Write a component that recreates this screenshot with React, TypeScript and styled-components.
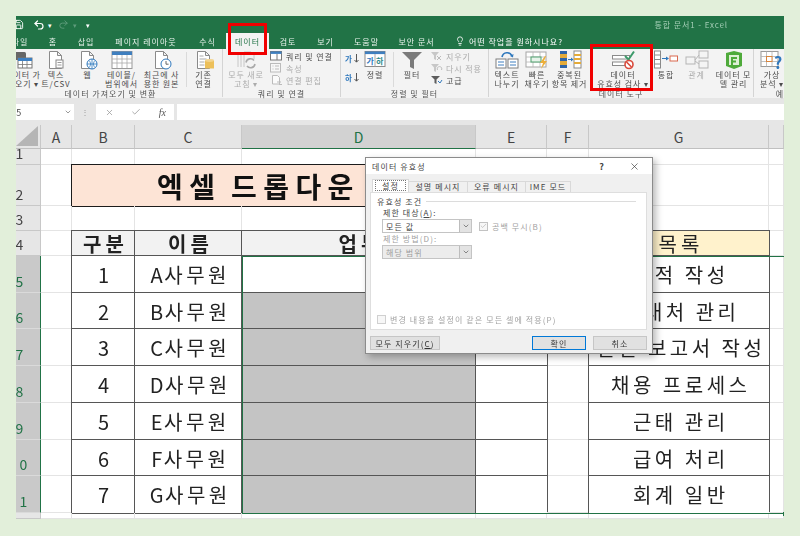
import React from "react";
import styled, { createGlobalStyle } from "styled-components";
import { Save, Undo2, Redo2, Lightbulb, X, Check, ChevronDown } from "lucide-react";

const FONT = `"Noto Sans CJK KR", "Noto Sans", sans-serif`;

const Global = createGlobalStyle`
  html, body { margin: 0; padding: 0; background: #e2efda; }
  * { box-sizing: border-box; }
`;

const Page = styled.div`
  position: relative;
  width: 800px;
  height: 536px;
  padding: 16px 16px 17px;
  background: #e2efda;
  font-family: ${FONT};
  overflow: hidden;
`;
const Win = styled.div`
  height: 503px;
  background: #fff;
  overflow: hidden;
  display: flex;
  flex-direction: column;
`;
const Green = styled.div`
  height: 33px;
  flex: none;
  background: #217346;
  display: flex;
  flex-direction: column;
  filter: blur(0.4px);
`;
const Qat = styled.div`
  height: 17px;
  display: flex;
  align-items: center;
  margin-left: -3px;
  color: #fff;
`;
const QatGap = styled.span<{ $w: number; $dim?: boolean }>`
  width: ${(p) => p.$w}px;
  flex: none;
  display: flex;
  justify-content: center;
  font-size: 7px;
  color: ${(p) => (p.$dim ? "#5f9c7c" : "#fff")};
`;
const DocTitle = styled.span`
  margin-left: auto;
  margin-right: 56px;
  font-size: 8px;
  letter-spacing: 0.9px;
  color: #a3cdb5;
`;
const TabRow = styled.div`
  height: 16px;
  display: flex;
  margin-left: -13px;
`;
const RibbonTab = styled.div<{ $w: number; $on?: boolean }>`
  width: ${(p) => p.$w}px;
  flex: none;
  display: flex;
  align-items: center;
  justify-content: center;
  font-size: 8px;
  letter-spacing: 1px;
  white-space: nowrap;
  color: ${(p) => (p.$on ? "#217346" : "#e8f3ec")};
  background: ${(p) => (p.$on ? "#f3f3f3" : "transparent")};
`;
const Search = styled.div`
  margin-left: 11px;
  display: flex;
  align-items: center;
  gap: 4px;
  font-size: 8px;
  letter-spacing: 1px;
  color: #fff;
`;
const Ribbon = styled.div`
  height: 49px;
  flex: none;
  background: #f3f3f3;
  display: flex;
  margin-left: -11px;
  filter: blur(0.4px);
`;
const Group = styled.div<{ $w: number; $last?: boolean }>`
  width: ${(p) => p.$w}px;
  flex: none;
  display: flex;
  flex-direction: column;
  margin-bottom: 1px;
  border-right: ${(p) => (p.$last ? "none" : "1px solid #d4d4d4")};
`;
const GroupBody = styled.div`
  height: 40px;
  display: flex;
`;
const GroupLabel = styled.div<{ $pr?: number }>`
  height: 8px;
  padding-right: ${(p) => p.$pr ?? 0}px;
  line-height: 9px;
  text-align: center;
  font-size: 8px;
  letter-spacing: 1px;
  color: #555;
  white-space: nowrap;
`;
const RBtn = styled.div<{ $w: number; $ml?: number; $off?: boolean }>`
  width: ${(p) => p.$w}px;
  margin-left: ${(p) => p.$ml ?? 0}px;
  flex: none;
  display: flex;
  flex-direction: column;
  align-items: center;
  color: ${(p) => (p.$off ? "#ababab" : "#4c4c4c")};
  font-size: 8px;
  letter-spacing: 0.9px;
  line-height: 9px;
  text-align: center;
  white-space: nowrap;
`;
const IconSlot = styled.div`
  height: 20px;
  margin-top: 1px;
  display: flex;
  align-items: center;
  justify-content: center;
`;
const VSep = styled.div<{ $ml: number; $mr: number }>`
  width: 1px;
  flex: none;
  margin: 3px ${(p) => p.$mr}px 2px ${(p) => p.$ml}px;
  background: #dadada;
`;
const SmallList = styled.div<{ $ml: number }>`
  margin-left: ${(p) => p.$ml}px;
  padding-top: 1px;
  display: flex;
  flex-direction: column;
`;
const SmallItem = styled.div<{ $off?: boolean }>`
  height: 12px;
  display: flex;
  align-items: center;
  gap: 3px;
  font-size: 8px;
  letter-spacing: 0.9px;
  white-space: nowrap;
  color: ${(p) => (p.$off ? "#ababab" : "#4c4c4c")};
`;
const SortCol = styled.div`
  margin-left: 4px;
  width: 15px;
  padding-top: 4px;
  display: flex;
  flex-direction: column;
  gap: 8px;
`;
const Strip = styled.div<{ $h: number }>`
  height: ${(p) => p.$h}px;
  flex: none;
  background: #e6e6e6;
`;
const FormulaBar = styled.div`
  height: 16px;
  flex: none;
  background: #e6e6e6;
  display: flex;
  color: #8a8a8a;
  filter: blur(0.3px);
`;
const NameBox = styled.div`
  width: 58px;
  flex: none;
  background: #fff;
  display: flex;
  align-items: center;
  justify-content: space-between;
  padding-right: 2px;
  font-size: 9px;
  color: #444;
  overflow: hidden;
`;
const NameText = styled.span`
  margin-left: -6px;
`;
const Dots = styled.div`
  width: 22px;
  flex: none;
  text-align: center;
  font-size: 8px;
  line-height: 16px;
  color: #999;
`;
const FxBox = styled.div`
  width: 78px;
  flex: none;
  background: #fff;
  display: flex;
  align-items: center;
  justify-content: space-between;
  padding: 0 8px 0 9px;
`;
const FxLabel = styled.span`
  font-family: "Liberation Serif", serif;
  font-style: italic;
  font-size: 10px;
  color: #555;
`;
const FormulaInput = styled.div`
  flex: 1;
  margin-left: 3px;
  background: #fff;
`;

const Sheet = styled.div`
  position: relative;
  flex: 1;
  display: grid;
  grid-template-columns: 25px 31px 63px 107px 234px 71px 42px 180px 15px;
  grid-template-rows: 24px 16px 41px 25px 25px 37px 36px 37px 37px 37px 36px 37px 6px;
  filter: blur(0.25px);
`;
const ColHead = styled.div<{ $sel?: boolean }>`
  display: flex;
  align-items: center;
  justify-content: center;
  font-size: 14px;
  background: ${(p) => (p.$sel ? "#d2d2d2" : "#e6e6e6")};
  color: ${(p) => (p.$sel ? "#217346" : "#444")};
  border-right: 1px solid #c8c8c8;
  border-bottom: ${(p) => (p.$sel ? "1.5px solid #217346" : "1px solid #c0c0c0")};
`;
const Corner = styled.div`
  background: #e6e6e6;
  border-right: 1px solid #c8c8c8;
  border-bottom: 1px solid #c0c0c0;
  display: flex;
  align-items: flex-end;
  justify-content: flex-end;
  padding: 0 2px 2px 0;
`;
const RowHead = styled.div<{ $sel?: boolean; $wide?: boolean }>`
  display: flex;
  align-items: flex-end;
  justify-content: center;
  padding: 0 17px 4px 0;
  overflow: hidden;
  font-size: 14px;
  line-height: 14px;
  letter-spacing: ${(p) => (p.$wide ? "6px" : "0")};
  background: ${(p) => (p.$sel ? "#c9c9c9" : "#e6e6e6")};
  color: ${(p) => (p.$sel ? "#217346" : "#444")};
  border-bottom: 1px solid ${(p) => (p.$sel ? "#dadada" : "#c8c8c8")};
  border-right: ${(p) => (p.$sel ? "1.5px solid #217346" : "1px solid #c8c8c8")};
`;
const Cell = styled.div`
  border-right: 1px solid #e4e4e4;
  border-bottom: 1px solid #e4e4e4;
`;
const DataCell = styled.div<{ $bg?: string; $bold?: boolean; $sp?: number }>`
  outline: 1px solid #565656;
  background: ${(p) => p.$bg ?? "#fff"};
  display: flex;
  align-items: center;
  justify-content: center;
  white-space: nowrap;
  overflow: hidden;
  padding-left: ${(p) => p.$sp ?? 3.5}px;
  font-size: 20px;
  font-weight: ${(p) => (p.$bold ? 700 : 400)};
  letter-spacing: ${(p) => p.$sp ?? 3.5}px;
  color: #222;
`;
const PersonLetter = styled.span`
  letter-spacing: 1.5px;
`;
const TitleCell = styled.div`
  grid-column: 3 / 7;
  grid-row: 3;
  outline: 1.5px solid #1c1c1c;
  background: #fde4d6;
  display: flex;
  align-items: center;
  padding-left: 85px;
  font-size: 28px;
  font-weight: 700;
  letter-spacing: 6.4px;
  word-spacing: -3px;
  white-space: nowrap;
  overflow: hidden;
  color: #111;
`;
const Selection = styled.div`
  grid-column: 5;
  grid-row: 6 / 13;
  position: absolute;
  inset: -0.5px;
  z-index: 1;
  border: 1.5px solid #217346;
  pointer-events: none;
`;
const Handle = styled.span`
  position: absolute;
  right: -3px;
  bottom: -3px;
  width: 4px;
  height: 4px;
  background: #217346;
`;

const Dialog = styled.div`
  position: absolute;
  left: 365px;
  top: 157px;
  width: 288px;
  height: 197px;
  background: #f0f0f0;
  border: 1px solid #8b8b8b;
  box-shadow: 3px 3px 7px rgba(0, 0, 0, 0.28);
  display: flex;
  flex-direction: column;
  font-size: 8px;
  letter-spacing: 1.1px;
  color: #444;
  filter: blur(0.4px);
  z-index: 3;
`;
const DlgTitle = styled.div`
  height: 16px;
  background: #fff;
  display: flex;
  align-items: center;
  padding-left: 6px;
  font-size: 8px;
  letter-spacing: 1.1px;
`;
const DlgHelp = styled.span`
  margin-left: auto;
  margin-right: 24px;
  font-weight: 700;
  font-size: 9px;
`;
const DlgClose = styled.span`
  margin-right: 12px;
  display: flex;
  color: #333;
`;
const DlgTabs = styled.div`
  margin: 6px 0 0 6px;
  height: 12px;
  display: flex;
  align-items: flex-end;
`;
const DlgTab = styled.div<{ $w: number; $on?: boolean }>`
  width: ${(p) => p.$w}px;
  height: ${(p) => (p.$on ? 13 : 11)}px;
  display: flex;
  align-items: center;
  justify-content: center;
  padding-bottom: 1px;
  white-space: nowrap;
  background: ${(p) => (p.$on ? "#fff" : "#f0f0f0")};
  border: 1px solid #d9d9d9;
  border-bottom: none;
  margin-right: -1px;
`;
const FocusText = styled.span`
  padding: 0 6px;
  line-height: 9px;
  outline: 1px dotted #777;
`;
const DlgPanel = styled.div`
  margin: 0 5px 0 4px;
  height: 138px;
  background: #fff;
  border: 1px solid #dedede;
  padding: 3px 6px 0;
  display: flex;
  flex-direction: column;
`;
const Legend = styled.div`
  display: flex;
  align-items: center;
  gap: 4px;
  height: 10px;
`;
const LegendRule = styled.div`
  flex: 1;
  height: 1px;
  background: #dcdcdc;
  margin-right: 4px;
`;
const FieldLabel = styled.div<{ $off?: boolean; $mt: number }>`
  margin: ${(p) => p.$mt}px 0 0 6px;
  height: 10px;
  line-height: 10px;
  color: ${(p) => (p.$off ? "#a0a0a0" : "#444")};
  span { text-decoration: underline; }
`;
const FieldRow = styled.div`
  display: flex;
  align-items: center;
  margin: 1px 0 0 5px;
  gap: 7px;
`;
const Select = styled.div<{ $off?: boolean }>`
  width: 90px;
  height: 14px;
  display: flex;
  align-items: center;
  padding-left: 3px;
  background: ${(p) => (p.$off ? "#ececec" : "#fff")};
  border: 1px solid #c4c4c4;
  color: ${(p) => (p.$off ? "#9c9c9c" : "#444")};
`;
const SelectArrow = styled.span`
  margin-left: auto;
  width: 12px;
  height: 100%;
  background: #e3e3e3;
  border-left: 1px solid #bdbdbd;
  display: flex;
  align-items: center;
  justify-content: center;
  color: #555;
`;
const CheckRow = styled.div`
  display: flex;
  align-items: center;
  gap: 4px;
  color: #a2a2a2;
  white-space: nowrap;
`;
const CheckBox = styled.span<{ $checked?: boolean }>`
  width: 9px;
  height: 9px;
  flex: none;
  border: 1px solid ${(p) => (p.$checked ? "#c2c2c2" : "#d0d0d0")};
  background: #f7f7f7;
  display: flex;
  align-items: center;
  justify-content: center;
  color: #a8a8a8;
`;
const PanelFoot = styled.div`
  margin-top: auto;
  margin-bottom: 4px;
`;
const DlgFoot = styled.div`
  margin: 6px 5px 0 4px;
  display: flex;
`;
const DlgBtn = styled.div<{ $w: number; $primary?: boolean; $push?: boolean; $ml?: number }>`
  width: ${(p) => p.$w}px;
  height: 14px;
  margin-left: ${(p) => (p.$push ? "auto" : `${p.$ml ?? 0}px`)};
  display: flex;
  align-items: center;
  justify-content: center;
  white-space: nowrap;
  background: #e1e1e1;
  border: 1px solid ${(p) => (p.$primary ? "#0078d7" : "#c6c6c6")};
  color: #333;
  span { text-decoration: underline; }
`;
const RedBox = styled.div<{ $x: number; $y: number; $w: number; $h: number }>`
  position: absolute;
  left: ${(p) => p.$x}px;
  top: ${(p) => p.$y}px;
  width: ${(p) => p.$w}px;
  height: ${(p) => p.$h}px;
  border: 3px solid #f00000;
  z-index: 4;
`;

const Ic = ({ w = 24, h = 20, children }: { w?: number; h?: number; children: React.ReactNode }) => (
  <svg width={w} height={h} viewBox={`0 0 ${w} ${h}`} fill="none">{children}</svg>
);
const PageShape = ({ c = "#8a8a8a" }: { c?: string }) => (
  <path d="M5.5 1.5h8l4 4v13h-12z M13.5 1.5v4h4" stroke={c} fill="#fff" strokeWidth="1" />
);
const icons: Record<string, React.ReactNode> = {
  get: (
    <Ic>
      <rect x="3" y="2" width="12" height="8" rx="1.5" fill="#666" />
      <rect x="7" y="8" width="14" height="10" fill="#fff" stroke="#777" />
      <rect x="7" y="8" width="14" height="3" fill="#3d7fc1" />
      <path d="M7 14.5h14M11.5 11v7M16 11v7" stroke="#777" strokeWidth=".8" />
    </Ic>
  ),
  text: (
    <Ic>
      <PageShape />
      <rect x="12" y="10" width="7" height="8" fill="#fff" stroke="#888" />
      <path d="M13.5 12.5h4M13.5 15h4" stroke="#999" />
    </Ic>
  ),
  web: (
    <Ic>
      <PageShape />
      <circle cx="16" cy="14" r="5" fill="#fff" stroke="#2f78bd" />
      <path d="M11 14h10M16 9v10M13 10.5c2 2 2 5 0 7M19 10.5c-2 2-2 5 0 7" stroke="#2f78bd" strokeWidth=".8" />
    </Ic>
  ),
  table: (
    <Ic>
      <rect x="2" y="1.5" width="20" height="17" fill="#fff" stroke="#999" />
      <rect x="2" y="1.5" width="20" height="3.5" fill="#3f7fbf" />
      <path d="M2 9h20M2 13h20M7 5v13M12 5v13M17 5v13" stroke="#aaa" strokeWidth=".8" />
    </Ic>
  ),
  recent: (
    <Ic>
      <PageShape />
      <circle cx="16" cy="14" r="5" fill="#fff" stroke="#2f78bd" />
      <path d="M16 11v3.2h2.6" stroke="#555" strokeWidth=".9" />
    </Ic>
  ),
  exist: (
    <Ic>
      <PageShape />
      <path d="M7.5 6h4M7.5 9h7M7.5 12h5M7.5 15h5" stroke="#aaa" />
      <path d="M13 10.5h9v8h-9z" fill="#edc05a" />
      <ellipse cx="17.5" cy="10.5" rx="4.5" ry="1.4" fill="#f3d48e" />
    </Ic>
  ),
  refresh: (
    <Ic>
      <path d="M4 2v15M7 2v15M10 2v15M10 2h7l3 3v4" stroke="#c6c6c6" />
      <path d="M12 12.5a4.5 4.5 0 0 1 8-2M21 14a4.5 4.5 0 0 1-8 2" stroke="#a9a9a9" strokeWidth="1.6" />
    </Ic>
  ),
  query: (
    <Ic w={13} h={10}>
      <rect x=".5" y=".5" width="11" height="8.5" fill="#fff" stroke="#7a7a7a" />
      <rect x=".5" y=".5" width="11" height="2.4" fill="#3f7fbf" />
      <path d="M7 3v6" stroke="#7a7a7a" />
    </Ic>
  ),
  prop: (
    <Ic w={13} h={10}>
      <rect x=".5" y=".5" width="10" height="8.5" fill="#f7f7f7" stroke="#bbb" />
      <path d="M2.5 3h1M5 3h4M2.5 6h1M5 6h4" stroke="#bbb" />
    </Ic>
  ),
  link: (
    <Ic w={13} h={10}>
      <path d="M2.5.5h5l2 2v6.5h-7z" fill="#fbfbfb" stroke="#bbb" />
      <path d="M7 7h4M9 9.5h3" stroke="#bbb" />
    </Ic>
  ),
  sortUp: (
    <Ic w={15} h={11}>
      <text x="0" y="9" fontSize="7.5" fontWeight="700" fill="#2f78bd" fontFamily={FONT}>가</text>
      <path d="M11.5 1v8M9.5 7l2 2.2L13.5 7" stroke="#555" />
    </Ic>
  ),
  sortDown: (
    <Ic w={15} h={11}>
      <text x="0" y="9" fontSize="7.5" fontWeight="700" fill="#2f78bd" fontFamily={FONT}>하</text>
      <path d="M11.5 1v8M9.5 7l2 2.2L13.5 7" stroke="#555" />
    </Ic>
  ),
  sort: (
    <Ic>
      <rect x="2" y="1.5" width="20" height="15" fill="#fff" stroke="#8a8a8a" />
      <rect x="2" y="1.5" width="20" height="2.6" fill="#3f7fbf" />
      <path d="M12 4v12.5" stroke="#aaa" />
      <text x="3.5" y="14" fontSize="8" fontWeight="700" fill="#2f78bd" fontFamily={FONT}>가</text>
      <text x="13" y="14" fontSize="8" fontWeight="700" fill="#2f8a8a" fontFamily={FONT}>하</text>
    </Ic>
  ),
  funnel: (
    <Ic>
      <path d="M2 2h20l-8 8v9l-4-2v-7z" fill="#7b7b7b" />
    </Ic>
  ),
  clear: (
    <Ic w={13} h={10}>
      <path d="M1 1h8L6 4.5V9L4 8V4.5z" fill="#c7c7c7" />
      <path d="M7 5l4 4M11 5l-4 4" stroke="#bbb" />
    </Ic>
  ),
  reapply: (
    <Ic w={13} h={10}>
      <path d="M1 1h8L6 4.5V9L4 8V4.5z" fill="#c7c7c7" />
      <path d="M7.5 7a2.3 2.3 0 1 1 4 0" stroke="#bbb" />
    </Ic>
  ),
  advanced: (
    <Ic w={13} h={10}>
      <path d="M1 1h9L6.5 4.5V9L4.5 8V4.5z" fill="#5d5d5d" />
      <path d="M8 6l2 2 2-3" stroke="#2f78bd" />
    </Ic>
  ),
  split: (
    <Ic>
      <rect x="1" y="9" width="10" height="9" fill="#fff" stroke="#7f7f7f" />
      <rect x="13" y="9" width="10" height="9" fill="#fff" stroke="#7f7f7f" />
      <path d="M3 12h6M3 15h6M15 12h6M15 15h6" stroke="#3f7fbf" />
      <path d="M7 7c1-5 8-6 10-1" stroke="#2f78bd" strokeWidth="1.6" />
      <path d="M15 6l3 1.5.5-3.5z" fill="#2f78bd" />
    </Ic>
  ),
  flash: (
    <Ic>
      <rect x="1" y="2" width="20" height="15" fill="#fff" stroke="#a5a5a5" />
      <path d="M1 7h20M1 12h20M8 2v15M15 2v15" stroke="#b5b5b5" strokeWidth=".8" />
      <rect x="6" y="7" width="10" height="5" fill="#e7f3ea" stroke="#4fa06e" />
      <path d="M20 6l-5 7h3l-2 6 6-8h-3l2-5z" fill="#edaf3a" />
    </Ic>
  ),
  dedupe: (
    <Ic>
      <rect x="2" y="1" width="7" height="17" fill="#e4ab3a" />
      <path d="M2 1h7v3H2zM2 8h7v3H2zM2 15h7v3H2z" fill="#2f65a8" />
      <rect x="16" y="1" width="7" height="17" fill="#fff" stroke="#8a8a8a" />
      <path d="M16 5h7M16 9h7M16 13h7" stroke="#e4ab3a" strokeWidth="2" />
      <path d="M10 9.5h4" stroke="#2f78bd" />
      <path d="M13 7.5l2.5 2-2.5 2z" fill="#2f78bd" />
    </Ic>
  ),
  valid: (
    <Ic>
      <rect x="1.5" y="5.5" width="17" height="3.5" fill="#fff" stroke="#8a8a8a" />
      <rect x="1.5" y="12" width="14" height="3.5" fill="#fff" stroke="#8a8a8a" />
      <path d="M14 6l3.5 3.5L23 1.5" stroke="#3c9a6a" strokeWidth="2" />
      <circle cx="18" cy="14.5" r="4" fill="#fff" stroke="#d94a3c" strokeWidth="1.6" />
      <path d="M15.5 12l5 5" stroke="#d94a3c" strokeWidth="1.6" />
    </Ic>
  ),
  merge: (
    <Ic>
      <rect x="0.5" y="1" width="6" height="17" fill="#fff" stroke="#8a8a8a" />
      <path d="M.5 5h6M.5 9.5h6M.5 14h6" stroke="#8a8a8a" />
      <path d="M8 8.5h5" stroke="#2f78bd" />
      <path d="M12 6.5l3 2-3 2z" fill="#2f78bd" />
      <rect x="16" y="6" width="7.5" height="5" fill="#fff" stroke="#d9694f" />
    </Ic>
  ),
  rel: (
    <Ic>
      <rect x="1" y="7" width="9" height="7" fill="#f4f4f4" stroke="#b5b5b5" />
      <rect x="14" y="1" width="9" height="7" fill="#f4f4f4" stroke="#b5b5b5" />
      <rect x="14" y="11" width="9" height="7" fill="#f4f4f4" stroke="#b5b5b5" />
      <path d="M10 10l4-5M10 11l4 3" stroke="#b5b5b5" />
    </Ic>
  ),
  model: (
    <Ic>
      <path d="M4 3l8-2 8 2v13l-8 3-8-3z" fill="#4faa3b" />
      <path d="M7 5h10v10H7z" fill="#dff0d6" />
      <path d="M9 7h6v2h-4v1.5h3v2h-3V15H9z" fill="#4faa3b" />
    </Ic>
  ),
  whatif: (
    <Ic>
      <rect x="1" y="1.5" width="17" height="15" fill="#fff" stroke="#9a9a9a" />
      <path d="M1 6.5h17M1 11.5h17M6.5 1.5v15M12 1.5v15" stroke="#b0b0b0" strokeWidth=".8" />
      <rect x="6.5" y="6.5" width="5.5" height="5" fill="#fff" stroke="#d9853c" />
      <text x="14" y="19" fontSize="16" fontWeight="700" fill="#2f78bd" fontFamily={FONT}>?</text>
    </Ic>
  ),
};

const Btn = ({ icon, w, ml, off, children }: { icon: string; w: number; ml?: number; off?: boolean; children: React.ReactNode }) => (
  <RBtn $w={w} $ml={ml} $off={off}>
    <IconSlot>{icons[icon]}</IconSlot>
    {children}
  </RBtn>
);

const tabs: [string, number][] = [
  ["파일", 34], ["홈", 32], ["삽입", 34], ["페이지 레이아웃", 86], ["수식", 37], ["데이터", 43],
  ["검토", 38], ["보기", 37], ["도움말", 45], ["보안 문서", 55],
];
const cols = ["A", "B", "C", "D", "E", "F", "G", ""];
const rowH = [1, 2, 3, 4, 5, 6, 7, 8, 9, 10, 11];
const people = ["A", "B", "C", "D", "E", "F", "G"];
const lists = ["견적 작성", "거래처 관리", "일일 보고서 작성", "채용 프로세스", "근태 관리", "급여 처리", "회계 일반"];

const blanks = (k: string, n: number) => Array.from({ length: n }, (_, i) => <Cell key={`${k}${i}`} />);

export default function App() {
  return (
    <Page>
      <Global />
      <Win>
        <Green>
          <Qat>
            <Save size={11} strokeWidth={2} />
            <QatGap $w={9} />
            <Undo2 size={12} strokeWidth={2.4} />
            <QatGap $w={9}>▾</QatGap>
            <QatGap $w={4} />
            <Redo2 size={11} color="#5f9c7c" />
            <QatGap $w={12} $dim>▾</QatGap>
            <QatGap $w={14}>▾</QatGap>
            <DocTitle>통합 문서1 - Excel</DocTitle>
          </Qat>
          <TabRow>
            {tabs.map(([t, w]) => (
              <RibbonTab key={t} $w={w} $on={t === "데이터"}>{t}</RibbonTab>
            ))}
            <Search>
              <Lightbulb size={10} />
              어떤 작업을 원하시나요?
            </Search>
          </TabRow>
        </Green>

        <Ribbon>
          <Group $w={218}>
            <GroupBody>
              <Btn icon="get" w={36}>데이터 가<br />져오기 ▾</Btn>
              <Btn icon="text" w={30}>텍스<br />트/CSV</Btn>
              <Btn icon="web" w={33}>웹</Btn>
              <Btn icon="table" w={35}>테이블/<br />범위에서</Btn>
              <Btn icon="recent" w={45}>최근에 사<br />용한 원본</Btn>
              <VSep $ml={2} $mr={1} />
              <Btn icon="exist" w={31}>기존<br />연결</Btn>
            </GroupBody>
            <GroupLabel $pr={6}>데이터 가져오기 및 변환</GroupLabel>
          </Group>
          <Group $w={118}>
            <GroupBody>
              <Btn icon="refresh" w={44} ml={1} off>모두 새로<br />고침 ▾</Btn>
              <SmallList $ml={2}>
                <SmallItem>{icons.query}쿼리 및 연결</SmallItem>
                <SmallItem $off>{icons.prop}속성</SmallItem>
                <SmallItem $off>{icons.link}연결 편집</SmallItem>
              </SmallList>
            </GroupBody>
            <GroupLabel>쿼리 및 연결</GroupLabel>
          </Group>
          <Group $w={148}>
            <GroupBody>
              <SortCol>
                {icons.sortUp}
                {icons.sortDown}
              </SortCol>
              <Btn icon="sort" w={30}>정렬</Btn>
              <VSep $ml={3} $mr={0} />
              <Btn icon="funnel" w={36}>필터</Btn>
              <SmallList $ml={0}>
                <SmallItem $off>{icons.clear}지우기</SmallItem>
                <SmallItem $off>{icons.reapply}다시 적용</SmallItem>
                <SmallItem>{icons.advanced}고급</SmallItem>
              </SmallList>
            </GroupBody>
            <GroupLabel>정렬 및 필터</GroupLabel>
          </Group>
          <Group $w={265}>
            <GroupBody>
              <Btn icon="split" w={30} ml={3}>텍스트<br />나누기</Btn>
              <Btn icon="flash" w={30}>빠른<br />채우기</Btn>
              <Btn icon="dedupe" w={35}>중복된<br />항목 제거</Btn>
              <Btn icon="valid" w={62} ml={5}>데이터<br />유효성 검사 ▾</Btn>
              <Btn icon="merge" w={24}>통합</Btn>
              <Btn icon="rel" w={37} off>관계</Btn>
              <Btn icon="model" w={37}>데이터 모<br />델 관리</Btn>
            </GroupBody>
            <GroupLabel>데이터 도구</GroupLabel>
          </Group>
          <Group $w={60} $last>
            <GroupBody>
              <Btn icon="whatif" w={36}>가상<br />분석 ▾</Btn>
            </GroupBody>
            <GroupLabel>예측</GroupLabel>
          </Group>
        </Ribbon>
        <Strip $h={6} />
        <FormulaBar>
          <NameBox>
            <NameText>D5</NameText>
            <ChevronDown size={8} color="#666" />
          </NameBox>
          <Dots>⋮</Dots>
          <FxBox>
            <X size={9} color="#9a9a9a" />
            <Check size={10} color="#9a9a9a" />
            <FxLabel>fx</FxLabel>
          </FxBox>
          <FormulaInput />
        </FormulaBar>
        <Strip $h={5} />

        <Sheet>
          <Corner>
            <svg width="22" height="20" viewBox="0 0 22 20">
              <path d="M22 0v20H0z" fill="#b5b5b5" />
            </svg>
          </Corner>
          {cols.map((c) => (
            <ColHead key={c || "H"} $sel={c === "D"}>{c}</ColHead>
          ))}
          {rowH.map((r) => {
            const i = r - 5;
            return (
              <React.Fragment key={r}>
                <RowHead $sel={r >= 5} $wide={r >= 10}>{r}</RowHead>
                {r === 2 && (
                  <>
                    <Cell />
                    <TitleCell>엑셀 드롭다운 목록</TitleCell>
                    {blanks("t", 3)}
                  </>
                )}
                {(r === 1 || r === 3) && blanks(`r${r}`, 8)}
                {r === 4 && (
                  <>
                    <Cell />
                    <DataCell $bg="#f2f2f2" $bold $sp={4}>구분</DataCell>
                    <DataCell $bg="#f2f2f2" $bold $sp={4}>이름</DataCell>
                    <DataCell $bg="#f2f2f2" $bold $sp={4}>업무</DataCell>
                    <DataCell />
                    <Cell />
                    <DataCell $bg="#fff2cc" $sp={4}>목록</DataCell>
                    <Cell />
                  </>
                )}
                {r >= 5 && (
                  <>
                    <Cell />
                    <DataCell $sp={0}>{i + 1}</DataCell>
                    <DataCell><PersonLetter>{people[i]}</PersonLetter>사무원</DataCell>
                    <DataCell $bg={r === 5 ? "#fff" : "#c4c4c4"} />
                    <DataCell />
                    <Cell />
                    <DataCell>{lists[i]}</DataCell>
                    <Cell />
                  </>
                )}
              </React.Fragment>
            );
          })}
          <RowHead />
          {blanks("end", 8)}
          <Selection>
            <Handle />
          </Selection>
        </Sheet>
      </Win>

      <Dialog>
        <DlgTitle>
          데이터 유효성
          <DlgHelp>?</DlgHelp>
          <DlgClose><X size={11} strokeWidth={1.4} /></DlgClose>
        </DlgTitle>
        <DlgTabs>
          <DlgTab $w={37} $on><FocusText>설정</FocusText></DlgTab>
          <DlgTab $w={60}>설명 메시지</DlgTab>
          <DlgTab $w={59}>오류 메시지</DlgTab>
          <DlgTab $w={46}>IME 모드</DlgTab>
        </DlgTabs>
        <DlgPanel>
          <Legend>
            유효성 조건
            <LegendRule />
          </Legend>
          <FieldLabel $mt={2}>제한 대상(<span>A</span>):</FieldLabel>
          <FieldRow>
            <Select>
              모든 값
              <SelectArrow><ChevronDown size={8} /></SelectArrow>
            </Select>
            <CheckRow>
              <CheckBox $checked><Check size={8} /></CheckBox>
              공백 무시(B)
            </CheckRow>
          </FieldRow>
          <FieldLabel $off $mt={1}>제한 방법(D):</FieldLabel>
          <FieldRow>
            <Select $off>
              해당 범위
              <SelectArrow><ChevronDown size={8} /></SelectArrow>
            </Select>
          </FieldRow>
          <PanelFoot>
            <CheckRow>
              <CheckBox />
              변경 내용을 설정이 같은 모든 셀에 적용(P)
            </CheckRow>
          </PanelFoot>
        </DlgPanel>
        <DlgFoot>
          <DlgBtn $w={70}>모두 지우기(<span>C</span>)</DlgBtn>
          <DlgBtn $w={54} $primary $push>확인</DlgBtn>
          <DlgBtn $w={54} $ml={7}>취소</DlgBtn>
        </DlgFoot>
      </Dialog>

      <RedBox $x={228} $y={23} $w={39} $h={32} />
      <RedBox $x={590} $y={44} $w={63} $h={47} />
    </Page>
  );
}
